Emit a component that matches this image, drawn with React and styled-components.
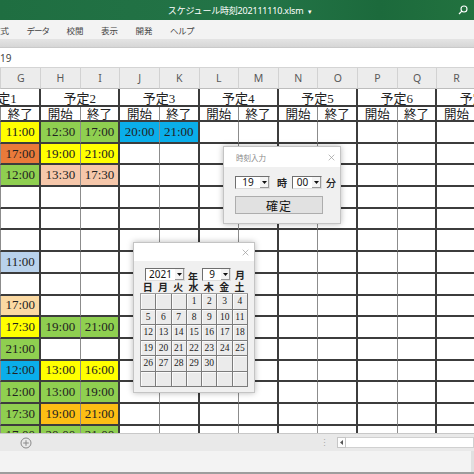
import React from 'react';
import styled, { createGlobalStyle } from 'styled-components';

const UI = `"Noto Sans", "Noto Sans CJK JP", sans-serif`;
const CJK = `"Noto Sans CJK JP", sans-serif`;
const CELL = `"Liberation Serif", "Noto Sans CJK JP", serif`;

const GlobalStyle = createGlobalStyle`
  html, body { margin: 0; padding: 0; background: #fff; overflow: hidden; }
  body { font-family: ${UI}; }
`;

const Window = styled.div`
  position: relative;
  width: 474px;
  height: 474px;
  overflow: hidden;
  display: flex;
  flex-direction: column;
  background: #fff;
`;

const TitleBar = styled.div`
  flex: none;
  height: 20px;
  background: linear-gradient(90deg, #1f6e41 0%, #237447 55%, #1c6a3c 80%, #22723f 100%);
  color: #fff;
  display: grid;
  grid-template-columns: 1fr auto 1fr;
  align-items: center;
  font: 9px ${UI};
`;

const TitleText = styled.span`
  grid-column: 2;
  letter-spacing: -0.2px;
  white-space: nowrap;
  padding-left: 6px;
`;

const Caret = styled.span`
  margin-left: 5px;
  font-size: 7px;
`;

const SearchIcon = styled.svg`
  justify-self: end;
  margin-right: 6px;
`;

const TabBar = styled.div`
  flex: none;
  height: 19px;
  background: #f3f3f3;
  display: flex;
  align-items: center;
  gap: 17.5px;
  margin-left: -8px;
  font: 8.5px ${CJK};
  color: #444;
`;

const Tab = styled.span`
  white-space: nowrap;
  letter-spacing: ${p => p.$ls || 0}px;
`;

const RibbonEdge = styled.div`
  flex: none;
  height: 9px;
  background: linear-gradient(#e4e4e4, #d6d6d6);
  border-bottom: 1px solid #c9c9c9;
  box-sizing: border-box;
`;

const FormulaBar = styled.div`
  flex: none;
  height: 20px;
  box-sizing: border-box;
  background: #fff;
  border-bottom: 1px solid #d4d4d4;
  display: flex;
  align-items: center;
  font: 10px ${UI};
  color: #444;
`;

const SheetArea = styled.div`
  flex: none;
  height: 365px;
  overflow: hidden;
  background: #fff;
`;

const Grid = styled.div`
  display: grid;
  grid-template-columns: repeat(14, 39.64px);
  grid-template-rows: 21px 18px 15px repeat(15, 21.7px);
  margin-left: -38.2px;
`;

const ColHead = styled.div`
  box-sizing: border-box;
  background: #ececec;
  border-right: 1px solid #d2d2d2;
  border-bottom: 1px solid #bdbdbd;
  display: flex;
  align-items: center;
  justify-content: center;
  font: 10.5px ${UI};
  color: #5a5a5a;
`;

const Cell = styled.div`
  box-sizing: border-box;
  grid-column: ${p => (p.$span ? `span ${p.$span}` : 'auto')};
  background: ${p => p.$bg || '#fff'};
  border-right: ${p => (p.$thick ? '2px solid #3c3c3c' : '1.5px solid #8c8c8c')};
  border-bottom: 2px solid #3c3c3c;
  display: flex;
  align-items: center;
  justify-content: center;
  font: ${p => p.$size || 13}px ${CELL};
  color: #222;
  white-space: nowrap;
  overflow: hidden;
`;

const Dialog = styled.div`
  position: absolute;
  left: ${p => p.$x}px;
  top: ${p => p.$y}px;
  width: ${p => p.$w}px;
  height: ${p => p.$h}px;
  box-sizing: border-box;
  border: 1px solid #c4c4c4;
  background: #f0f0f0;
  box-shadow: 0 0 6px rgba(0, 0, 0, 0.28);
  display: flex;
  flex-direction: column;
`;

const DialogTitle = styled.div`
  flex: none;
  height: ${p => p.$h}px;
  background: #fff;
  display: flex;
  align-items: center;
  justify-content: space-between;
  padding: 0 5px 0 12px;
  font: 7.5px ${CJK};
  color: #8a8a8a;
`;

const Close = styled.svg`
  flex: none;
`;

const TimeBody = styled.div`
  padding: 9px 0 0 11px;
  display: flex;
  flex-direction: column;
  gap: 7px;
`;

const ComboRow = styled.div`
  display: flex;
  align-items: center;
`;

const Combo = styled.div`
  width: ${p => p.$w}px;
  height: 13px;
  box-sizing: border-box;
  background: #fff;
  border: 1px solid;
  border-color: #6f6f6f #dcdcdc #dcdcdc #6f6f6f;
  display: flex;
  align-items: center;
  margin-left: ${p => p.$ml || 0}px;
`;

const ComboText = styled.span`
  flex: 1;
  text-align: center;
  font: 10px ${UI};
  color: #111;
  line-height: 11px;
`;

const DropBtn = styled.span`
  flex: none;
  width: 9px;
  height: 11px;
  box-sizing: border-box;
  background: #f4f4f4;
  border-right: 1px solid #9a9a9a;
  border-bottom: 1px solid #9a9a9a;
  display: flex;
  align-items: center;
  justify-content: center;
`;

const Label = styled.span`
  font: ${p => p.$weight || 500} 10px ${CJK};
  color: #222;
  margin-left: ${p => p.$ml || 0}px;
  line-height: 10px;
  align-self: ${p => (p.$low ? 'flex-end' : 'center')};
  margin-bottom: ${p => (p.$low ? -1 : 0)}px;
`;

const OkButton = styled.div`
  width: 88px;
  height: 18px;
  box-sizing: border-box;
  background: #e1e1e1;
  border: 1px solid #adadad;
  display: flex;
  align-items: center;
  justify-content: center;
  font: 12px ${CJK};
  letter-spacing: 1px;
  color: #111;
`;

const CalBody = styled.div`
  padding: 7px 0 0 6px;
  display: flex;
  flex-direction: column;
`;

const CalCombos = styled.div`
  display: flex;
  align-items: center;
  padding-left: 5px;
  height: 13px;
`;

const Week = styled.div`
  display: grid;
  grid-template-columns: repeat(7, 15.3px);
  height: 12px;
  align-items: end;
`;

const WeekDay = styled.span`
  text-align: center;
  font: 700 10px ${CJK};
  color: #222;
  line-height: 10px;
  padding-bottom: 1px;
`;

const Days = styled.div`
  display: grid;
  grid-template-columns: repeat(7, 15.3px);
  grid-template-rows: repeat(6, 15.5px);
  width: fit-content;
  border-top: 1px solid #9c9c9c;
  border-left: 1px solid #9c9c9c;
`;

const Day = styled.div`
  box-sizing: border-box;
  background: #ebebeb;
  border-right: 1px solid #7c7c7c;
  border-bottom: 1px solid #7c7c7c;
  box-shadow: inset 1px 1px 0 #fafafa;
  display: flex;
  align-items: center;
  justify-content: center;
  font: 9.5px ${CELL};
  color: #222;
`;

const SheetTabs = styled.div`
  flex: none;
  height: 18px;
  box-sizing: border-box;
  background: #e9e9e9;
  border-top: 1px solid #c8c8c8;
  display: flex;
  align-items: center;
`;

const AddSheet = styled.svg`
  margin-left: 20px;
`;

const Splitter = styled.span`
  margin-left: auto;
  font: 9px ${UI};
  color: #aaa;
  margin-right: 8px;
`;

const ScrollBtn = styled.div`
  width: 9px;
  height: 11px;
  box-sizing: border-box;
  border: 1px solid #c6c6c6;
  background: #fdfdfd;
  display: flex;
  align-items: center;
  justify-content: center;
`;

const ScrollTrack = styled.div`
  width: 128px;
  height: 11px;
  box-sizing: border-box;
  border: 1px solid #d0d0d0;
  border-left: none;
  background: #fff;
`;

const StatusBar = styled.div`
  flex: none;
  height: 21px;
  box-sizing: border-box;
  background: #f3f3f3;
  border-right: 3px solid #e0e0e0;
`;

const BottomEdge = styled.div`
  flex: none;
  height: 2px;
  background: #9d9d9d;
`;

const COLS = ['F', 'G', 'H', 'I', 'J', 'K', 'L', 'M', 'N', 'O', 'P', 'Q', 'R', 'S'];

const Y = '#ffff00';
const GR = '#8fcf50';
const B = '#0aaeea';
const OR = '#ea7a3a';
const PE = '#f6c7aa';
const LB = '#b9d2ec';
const LO = '#fbd9a2';
const GO = '#fdbe14';

const DATA = [
  { G: ['11:00', Y], H: ['12:30', GR], I: ['17:00', GR], J: ['20:00', B], K: ['21:00', B] },
  { G: ['17:00', OR], H: ['19:00', Y], I: ['21:00', Y] },
  { G: ['12:00', GR], H: ['13:30', PE], I: ['17:30', PE] },
  {},
  {},
  {},
  { G: ['11:00', LB] },
  {},
  { G: ['17:00', LO] },
  { G: ['17:30', Y], H: ['19:00', GR], I: ['21:00', GR] },
  { G: ['21:00', GR] },
  { G: ['12:00', B], H: ['13:00', Y], I: ['16:00', Y] },
  { G: ['12:00', GR], H: ['13:00', GR], I: ['19:00', GR] },
  { G: ['17:30', GR], H: ['19:00', GO], I: ['21:00', GO] },
  { G: ['17:00', GR], H: ['20:00', GR], I: ['21:00', GR] },
];

const DAYS = [
  '', '', '', '1', '2', '3', '4',
  '5', '6', '7', '8', '9', '10', '11',
  '12', '13', '14', '15', '16', '17', '18',
  '19', '20', '21', '22', '23', '24', '25',
  '26', '27', '28', '29', '30', '', '',
  '', '', '', '', '', '', '',
];

const Tri = () => (
  <svg width="5" height="3" viewBox="0 0 5 3">
    <polygon points="0,0 5,0 2.5,3" fill="#111" />
  </svg>
);

const X = ({ size = 7 }) => (
  <Close width={size} height={size} viewBox="0 0 10 10">
    <path d="M1 1 L9 9 M9 1 L1 9" stroke="#9a9a9a" strokeWidth="1" fill="none" />
  </Close>
);

export default function App() {
  return (
    <>
      <GlobalStyle />
      <Window>
        <TitleBar>
          <TitleText>
            スケジュール時刻202111110.xlsm<Caret>▾</Caret>
          </TitleText>
          <SearchIcon width="10" height="10" viewBox="0 0 10 10">
            <circle cx="6" cy="4" r="3" stroke="#fff" strokeWidth="1.1" fill="none" />
            <path d="M3.8 6.2 L1 9" stroke="#fff" strokeWidth="1.2" />
          </SearchIcon>
        </TitleBar>

        <TabBar>
          <Tab>数式</Tab>
          <Tab $ls={-1}>データ</Tab>
          <Tab>校閲</Tab>
          <Tab>表示</Tab>
          <Tab>開発</Tab>
          <Tab $ls={-0.5}>ヘルプ</Tab>
        </TabBar>
        <RibbonEdge />
        <FormulaBar>19</FormulaBar>

        <SheetArea>
          <Grid>
            {COLS.map(c => (
              <ColHead key={c}>{c}</ColHead>
            ))}
            {[1, 2, 3, 4, 5, 6, 7].map(n => (
              <Cell key={'p' + n} $span={2} $thick>
                予定{n}
              </Cell>
            ))}
            {COLS.map((c, i) => (
              <Cell key={'h' + c} $thick={i % 2 === 1} $size={12.5}>
                {i % 2 === 0 ? '開始' : '終了'}
              </Cell>
            ))}
            {DATA.map((row, r) =>
              COLS.map((c, i) => {
                const v = row[c];
                return (
                  <Cell key={r + c} $thick={i % 2 === 1} $bg={v ? v[1] : undefined}>
                    {v ? v[0] : ''}
                  </Cell>
                );
              })
            )}
          </Grid>
        </SheetArea>

        <SheetTabs>
          <AddSheet width="12" height="12" viewBox="0 0 12 12">
            <circle cx="6" cy="6" r="5" stroke="#8a8a8a" strokeWidth="1" fill="none" />
            <path d="M6 3.2 V8.8 M3.2 6 H8.8" stroke="#8a8a8a" strokeWidth="1" />
          </AddSheet>
          <Splitter>⋮</Splitter>
          <ScrollBtn>
            <svg width="3" height="5" viewBox="0 0 3 5">
              <polygon points="3,0 3,5 0,2.5" fill="#555" />
            </svg>
          </ScrollBtn>
          <ScrollTrack />
        </SheetTabs>
        <StatusBar />
        <BottomEdge />

        <Dialog $x={223} $y={146} $w={118} $h={78}>
          <DialogTitle $h={20}>
            時刻入力
            <X />
          </DialogTitle>
          <TimeBody>
            <ComboRow>
              <Combo $w={35}>
                <ComboText>19</ComboText>
                <DropBtn>
                  <Tri />
                </DropBtn>
              </Combo>
              <Label $ml={7} $weight={700}>時</Label>
              <Combo $w={30} $ml={5}>
                <ComboText>00</ComboText>
                <DropBtn>
                  <Tri />
                </DropBtn>
              </Combo>
              <Label $ml={4}>分</Label>
            </ComboRow>
            <OkButton>確定</OkButton>
          </TimeBody>
        </Dialog>

        <Dialog $x={133} $y={242} $w={122} $h={151}>
          <DialogTitle $h={18}>
            <span />
            <X />
          </DialogTitle>
          <CalBody>
            <CalCombos>
              <Combo $w={40}>
                <ComboText>2021</ComboText>
                <DropBtn>
                  <Tri />
                </DropBtn>
              </Combo>
              <Label $ml={3} $weight={700} $low>年</Label>
              <Combo $w={29} $ml={4}>
                <ComboText>9</ComboText>
                <DropBtn>
                  <Tri />
                </DropBtn>
              </Combo>
              <Label $ml={4} $weight={700}>月</Label>
            </CalCombos>
            <Week>
              {['日', '月', '火', '水', '木', '金', '土'].map(d => (
                <WeekDay key={d}>{d}</WeekDay>
              ))}
            </Week>
            <Days>
              {DAYS.map((d, i) => (
                <Day key={i}>{d}</Day>
              ))}
            </Days>
          </CalBody>
        </Dialog>
      </Window>
    </>
  );
}
